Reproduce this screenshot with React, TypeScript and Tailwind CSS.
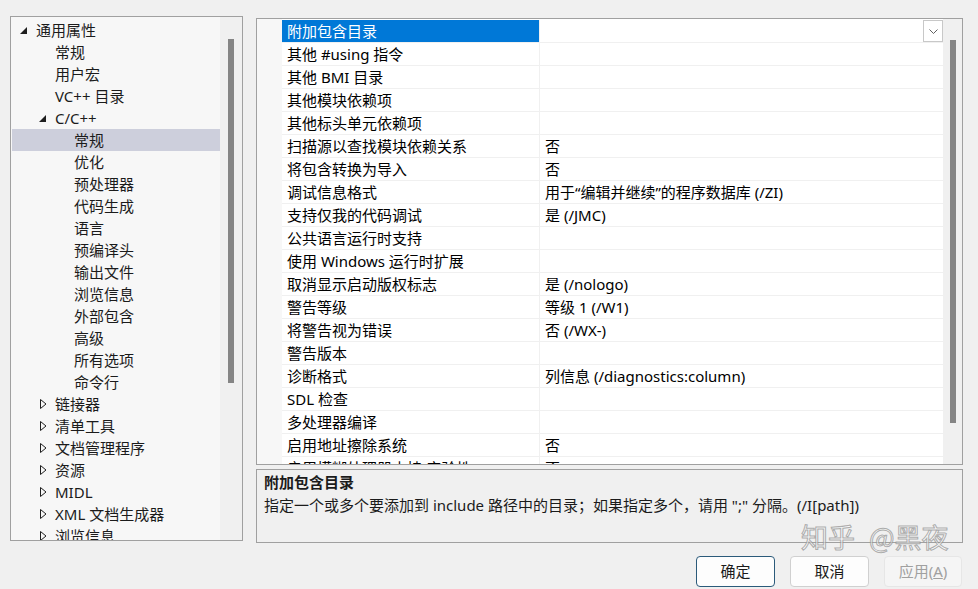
import React from "react";

const font = { fontFamily: '"Noto Sans", "Noto Sans CJK SC", sans-serif' };

type TreeItem = { label: string; level: number; arrow?: "open" | "closed"; selected?: boolean };

const tree: TreeItem[] = [
  { label: "通用属性", level: 0, arrow: "open" },
  { label: "常规", level: 1 },
  { label: "用户宏", level: 1 },
  { label: "VC++ 目录", level: 1 },
  { label: "C/C++", level: 1, arrow: "open" },
  { label: "常规", level: 2, selected: true },
  { label: "优化", level: 2 },
  { label: "预处理器", level: 2 },
  { label: "代码生成", level: 2 },
  { label: "语言", level: 2 },
  { label: "预编译头", level: 2 },
  { label: "输出文件", level: 2 },
  { label: "浏览信息", level: 2 },
  { label: "外部包含", level: 2 },
  { label: "高级", level: 2 },
  { label: "所有选项", level: 2 },
  { label: "命令行", level: 2 },
  { label: "链接器", level: 1, arrow: "closed" },
  { label: "清单工具", level: 1, arrow: "closed" },
  { label: "文档管理程序", level: 1, arrow: "closed" },
  { label: "资源", level: 1, arrow: "closed" },
  { label: "MIDL", level: 1, arrow: "closed" },
  { label: "XML 文档生成器", level: 1, arrow: "closed" },
  { label: "浏览信息", level: 1, arrow: "closed" },
];

const props: [string, string][] = [
  ["附加包含目录", ""],
  ["其他 #using 指令", ""],
  ["其他 BMI 目录", ""],
  ["其他模块依赖项", ""],
  ["其他标头单元依赖项", ""],
  ["扫描源以查找模块依赖关系", "否"],
  ["将包含转换为导入", "否"],
  ["调试信息格式", "用于“编辑并继续”的程序数据库 (/ZI)"],
  ["支持仅我的代码调试", "是 (/JMC)"],
  ["公共语言运行时支持", ""],
  ["使用 Windows 运行时扩展", ""],
  ["取消显示启动版权标志", "是 (/nologo)"],
  ["警告等级", "等级 1 (/W1)"],
  ["将警告视为错误", "否 (/WX-)"],
  ["警告版本", ""],
  ["诊断格式", "列信息 (/diagnostics:column)"],
  ["SDL 检查", ""],
  ["多处理器编译", ""],
  ["启用地址擦除系统", "否"],
  ["启用模糊处理器支持(实验性)", "否"],
];

function Arrow({ kind }: { kind?: "open" | "closed" }) {
  if (kind === "open")
    return (
      <svg width="7" height="7" viewBox="0 0 7 7" className="mt-[1px]">
        <polygon points="7,0 7,7 0,7" fill="#1e1e1e" />
      </svg>
    );
  if (kind === "closed")
    return (
      <svg width="7" height="10" viewBox="0 0 7 10" className="ml-[1px]">
        <polygon points="0.5,0.5 6,5 0.5,9.5" fill="none" stroke="#1e1e1e" strokeWidth="1" />
      </svg>
    );
  return null;
}

export default function App() {
  return (
    <div className="relative w-[978px] h-[589px] overflow-hidden bg-[#f0f0f0] text-[15px]" style={font}>
      <div className="flex pl-[10px] pt-[16px]">
        {/* Left tree panel */}
        <div className="w-[233px] h-[525px] border border-[#a0a0a0] bg-[#f7f7f7] flex overflow-hidden">
          <div className="w-[209px] pt-[2px] overflow-hidden">
            {tree.map((t, i) => (
              <div
                key={i}
                className={
                  "h-[22px] flex items-center leading-[22px] text-[#1b1b1b] whitespace-nowrap " +
                  (t.selected ? "bg-[#cdcfdc] ml-[1px]" : "")
                }
                style={{ paddingLeft: 9 + 19 * t.level - (t.selected ? 1 : 0) }}
              >
                <span className="w-[16px] flex items-center">
                  <Arrow kind={t.arrow} />
                </span>
                <span>{t.label}</span>
              </div>
            ))}
          </div>
          <div className="flex-1 bg-[#f0f0f0] flex justify-center">
            <div className="w-[6px] h-[344px] mt-[22px] bg-[#858585]" />
          </div>
        </div>

        {/* Right column */}
        <div className="ml-[13px] w-[707px] flex flex-col">
          <div className="mt-[2px] h-[447px] border border-[#a0a0a0] flex overflow-hidden bg-white">
            <div className="w-[25px] bg-[#f7f7f7]" />
            <div className="w-[661px] pt-[1px] overflow-hidden">
              {props.map(([name, value], i) => (
                <div key={i} className="h-[23px] flex border-b border-[#f0f0f0] leading-[22px] text-black whitespace-nowrap">
                  <div
                    className={
                      "w-[258px] h-[22px] pl-[5px] border-r border-[#f0f0f0] " +
                      (i === 0 ? "bg-[#0078d7] text-white" : "")
                    }
                  >
                    {name}
                  </div>
                  <div className="flex-1 h-[22px] pl-[5px] flex items-center justify-between">
                    <span>{value}</span>
                    {i === 0 && (
                      <div className="w-[20px] h-[22px] border border-[#c8c8c8] bg-white flex items-center justify-center">
                        <svg width="9" height="5" viewBox="0 0 9 5">
                          <polyline points="0.5,0.5 4.5,4.5 8.5,0.5" fill="none" stroke="#606060" strokeWidth="1" />
                        </svg>
                      </div>
                    )}
                  </div>
                </div>
              ))}
            </div>
            <div className="flex-1 bg-[#f0f0f0] flex justify-center">
              <div className="w-[6px] h-[383px] mt-[21px] bg-[#858585]" />
            </div>
          </div>

          {/* Description */}
          <div className="mt-[4px] h-[74px] border border-[#a0a0a0] bg-[#f0f0f0] pl-[7px] pt-[1px] leading-[23px] text-[#1b1b1b]">
            <div className="font-bold">附加包含目录</div>
            <div>指定一个或多个要添加到 include 路径中的目录；如果指定多个，请用 ";" 分隔。(/I[path])</div>
          </div>

          {/* Buttons */}
          <div className="mt-[13px] flex justify-end gap-[15px] pr-[1px]">
            <button className="w-[79px] h-[31px] rounded-[4px] border border-[#2b5a7a] bg-[#fdfdfd] text-[#1b1b1b] text-[15px]" style={font}>
              确定
            </button>
            <button className="w-[79px] h-[31px] rounded-[4px] border border-[#d0d0d0] bg-[#fdfdfd] text-[#1b1b1b] text-[15px]" style={font}>
              取消
            </button>
            <button className="w-[78px] h-[31px] rounded-[4px] border border-[#e6e6e6] bg-[#f5f5f5] text-[#a0a0a0] text-[15px]" style={font}>
              应用(<span className="underline">A</span>)
            </button>
          </div>
        </div>
      </div>

      {/* Watermark */}
      <div
        className="absolute left-[801px] top-[521px] flex gap-[14px] text-[27px] leading-[32px] whitespace-nowrap text-[rgba(255,255,255,0.6)] [-webkit-text-stroke:1px_rgba(130,130,130,0.65)] pointer-events-none"
        style={{ fontFamily: '"Noto Sans CJK SC", sans-serif' }}
      >
        <span>知乎</span>
        <span>@黑夜</span>
      </div>
    </div>
  );
}
